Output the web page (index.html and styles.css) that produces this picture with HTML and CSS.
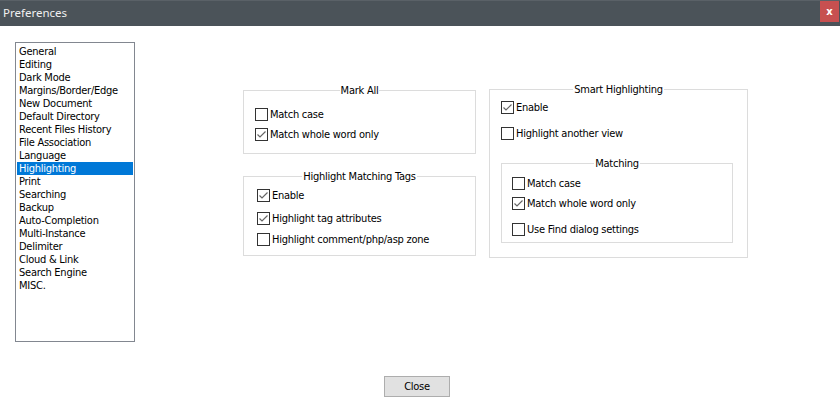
FILE: index.html
```html
<!DOCTYPE html>
<html>
<head>
<meta charset="utf-8">
<link rel="stylesheet" href="styles.css">
</head>
<body>
<div class="window">
  <div class="titlebar">
    <span class="title">Preferences</span>
    <span class="close-x">x</span>
  </div>
  <div class="content">
    <ul class="listbox">
      <li>General</li>
      <li>Editing</li>
      <li>Dark Mode</li>
      <li>Margins/Border/Edge</li>
      <li>New Document</li>
      <li>Default Directory</li>
      <li>Recent Files History</li>
      <li>File Association</li>
      <li>Language</li>
      <li class="selected">Highlighting</li>
      <li>Print</li>
      <li>Searching</li>
      <li>Backup</li>
      <li>Auto-Completion</li>
      <li>Multi-Instance</li>
      <li>Delimiter</li>
      <li>Cloud &amp; Link</li>
      <li>Search Engine</li>
      <li>MISC.</li>
    </ul>
    <div class="col-left">
      <fieldset class="group mark-all">
        <legend>Mark All</legend>
        <label class="cb r-ma1"><span class="box"></span>Match case</label>
        <label class="cb r-ma2"><span class="box checked"><svg viewBox="0 0 11 11"><polyline points="1.5,5.5 4,8 9.5,2.5"/></svg></span>Match whole word only</label>
      </fieldset>
      <fieldset class="group hmt">
        <legend>Highlight Matching Tags</legend>
        <label class="cb r-h1"><span class="box checked"><svg viewBox="0 0 11 11"><polyline points="1.5,5.5 4,8 9.5,2.5"/></svg></span>Enable</label>
        <label class="cb r-h2"><span class="box checked"><svg viewBox="0 0 11 11"><polyline points="1.5,5.5 4,8 9.5,2.5"/></svg></span>Highlight tag attributes</label>
        <label class="cb r-h3"><span class="box"></span>Highlight comment/php/asp zone</label>
      </fieldset>
    </div>
    <div class="col-right">
      <fieldset class="group smart">
        <legend>Smart Highlighting</legend>
        <label class="cb r-s1"><span class="box checked"><svg viewBox="0 0 11 11"><polyline points="1.5,5.5 4,8 9.5,2.5"/></svg></span>Enable</label>
        <label class="cb r-s2"><span class="box"></span>Highlight another view</label>
        <fieldset class="group matching">
          <legend>Matching</legend>
          <label class="cb r-m1"><span class="box"></span>Match case</label>
          <label class="cb r-m2"><span class="box checked"><svg viewBox="0 0 11 11"><polyline points="1.5,5.5 4,8 9.5,2.5"/></svg></span>Match whole word only</label>
          <label class="cb r-m3"><span class="box"></span>Use Find dialog settings</label>
        </fieldset>
      </fieldset>
    </div>
  </div>
  <div class="footer">
    <button class="btn">Close</button>
  </div>
</div>
</body>
</html>
```

FILE: styles.css
```css
* { box-sizing: border-box; }
html, body {
  margin: 0;
  padding: 0;
  background: #ffffff;
}
body {
  font-family: "DejaVu Sans Condensed", "DejaVu Sans", sans-serif;
  font-size: 11px;
  letter-spacing: -0.25px;
  color: #000;
  width: 840px;
  height: 408px;
  overflow: hidden;
}
.window {
  display: flex;
  flex-direction: column;
  height: 408px;
}
.titlebar {
  height: 26px;
  background: #4b5359;
  border-top: 1px solid #5a6167;
  display: flex;
  align-items: flex-start;
  justify-content: space-between;
}
.title {
  font-family: "Noto Sans", "Open Sans", sans-serif;
  font-size: 11.5px;
  letter-spacing: 0;
  color: #f0f0f0;
  padding-left: 3px;
  line-height: 24px;
}
.close-x {
  width: 19px;
  height: 21px;
  margin-right: 1px;
  background: #c75050;
  color: #fff;
  font-family: "DejaVu Sans", sans-serif;
  font-weight: bold;
  font-size: 10px;
  letter-spacing: 0;
  line-height: 21px;
  text-align: center;
}
.content {
  display: flex;
  align-items: flex-start;
  padding: 16px 0 0 15px;
  height: 334px;
}
.listbox {
  list-style: none;
  margin: 0;
  padding: 2px 1px;
  width: 120px;
  height: 300px;
  border: 1px solid #828790;
}
.listbox li {
  height: 13px;
  line-height: 13px;
  padding-left: 2px;
  white-space: nowrap;
}
.listbox li.selected {
  background: #0078d7;
  color: #fff;
}
.group {
  margin: 0;
  padding: 0;
  border: 1px solid #dcdcdc;
  display: flex;
  flex-direction: column;
  align-items: flex-start;
  min-width: 0;
}
.group legend {
  margin: 0 auto;
  padding: 0 1px;
  line-height: 13px;
}
.col-left {
  margin-left: 108px;
  margin-top: 42px;
  width: 233px;
  display: flex;
  flex-direction: column;
}
.col-right {
  margin-left: 13px;
  margin-top: 41px;
  width: 259px;
}
.mark-all { height: 70px; }
.hmt { height: 86px; margin-top: 16px; }
.smart { height: 175px; }
.matching {
  width: 232px;
  height: 86px;
  margin-left: 11px;
  margin-top: 17px;
}
.cb {
  display: flex;
  align-items: center;
  height: 13px;
  line-height: 13px;
  white-space: nowrap;
}
.box {
  width: 13px;
  height: 13px;
  border: 1px solid #333333;
  background: #fff;
  margin-right: 2px;
  flex: none;
  display: flex;
  align-items: center;
  justify-content: center;
}
.box svg {
  width: 11px;
  height: 11px;
  display: block;
}
.box svg polyline {
  fill: none;
  stroke: #666;
  stroke-width: 1.2;
}
.r-ma1 { margin: 11px 0 0 11px; }
.r-ma2 { margin: 7px 0 0 11px; }
.r-h1 { margin: 6px 0 0 13px; }
.r-h2 { margin: 10px 0 0 13px; }
.r-h3 { margin: 8px 0 0 13px; }
.r-s1 { margin: 5px 0 0 11px; }
.r-s2 { margin: 13px 0 0 11px; }
.r-m1 { margin: 7px 0 0 10px; }
.r-m2 { margin: 7px 0 0 10px; }
.r-m3 { margin: 13px 0 0 10px; }
.footer {
  padding: 16px 0 0 384px;
}
.btn {
  width: 66px;
  height: 21px;
  margin: 0;
  padding: 0;
  background: #e1e1e1;
  border: 1px solid #adadad;
  font-family: "DejaVu Sans Condensed", "DejaVu Sans", sans-serif;
  font-size: 11px;
  letter-spacing: -0.25px;
  color: #000;
}
```
